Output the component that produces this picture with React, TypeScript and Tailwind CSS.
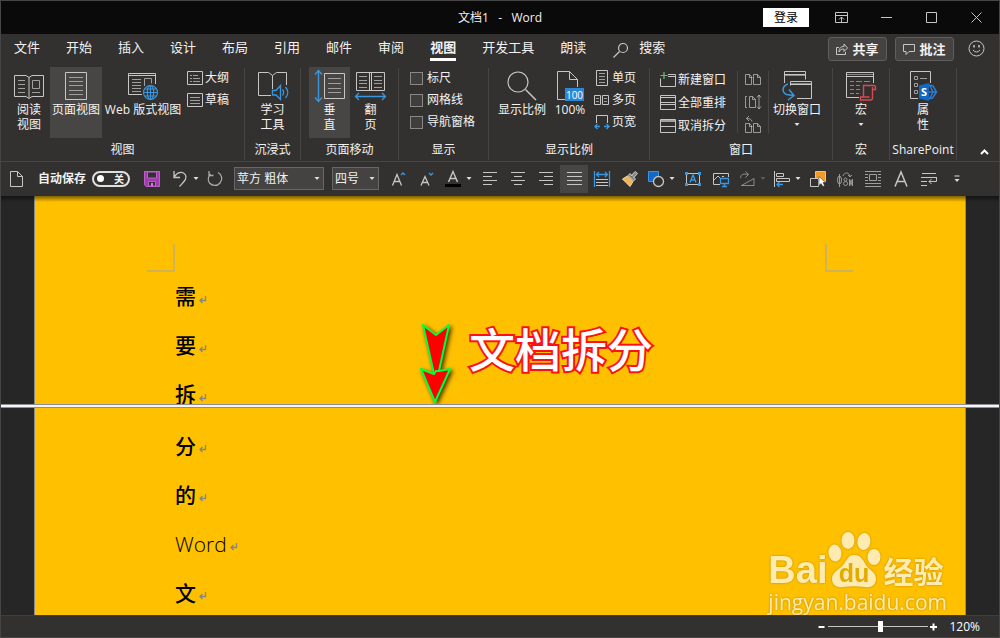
import type { ReactNode } from "react";

type IconProps = { w?: number; h?: number; className?: string; children: ReactNode };

const Icon = ({ w = 16, h = 16, className = "", children }: IconProps) => (
  <svg
    width={w}
    height={h}
    viewBox={`0 0 ${w} ${h}`}
    fill="none"
    stroke="#c8c6c4"
    aria-hidden="true"
    className={`shrink-0 overflow-visible ${className}`}
  >
    {children}
  </svg>
);

const BLUE = "#3a96dd";

/* ---------- ribbon icons ---------- */

const ReadIcon = () => (
  <Icon w={30} h={26}>
    <path d="M.5 2.500h11.500l3 2 3-2h11.500v21H18l-3 2-3-2H.5zM15 4v21" />
    <path d="M4 7.500h7M4 11.500h7M4 15.500h7M4 19.500h7M18.500 7.500h7v8h-7zM18 19.500h8" stroke="#a19f9d" />
  </Icon>
);

const PageIcon = () => (
  <Icon w={22} h={28}>
    <path d="M.5.5h21v27H.5z" />
    <path d="M4 5.500h14M4 9.500h14M4 13.500h14M4 18.500h14M4 22.500h14" stroke="#a19f9d" />
  </Icon>
);

const WebIcon = () => (
  <Icon w={30} h={28}>
    <path d="M14 22.500H.5V1.500h27V12M1 3.500h26" />
    <path d="M4 7.500h9M4 10.500h9M4 13.500h9M4 16.500h9M4 19.500h9M16.500 14V6.500h7v5" stroke="#a19f9d" />
    <g stroke={BLUE} strokeWidth="1.200">
      <circle cx="22.500" cy="20.500" r="7" />
      <ellipse cx="22.500" cy="20.500" rx="3.200" ry="7" />
      <path d="M22.500 13.500v14M15.500 20.500h14M16.500 17h12M16.500 24h12" />
    </g>
  </Icon>
);

const OutlineIcon = () => (
  <Icon h={14}>
    <path d="M.5.5h15v13H.5z" />
    <path d="M3 4.500h2M6 4.500h5M3 7.500h2M6 7.500h7M3 10.500h2M6 10.500h7" stroke="#a19f9d" />
  </Icon>
);

const DraftIcon = () => (
  <Icon h={14}>
    <path d="M.5.5h15v13H.5z" />
    <path d="M3 4.500h10M3 7.500h10M3 10.500h10" stroke="#a19f9d" />
  </Icon>
);

const LearnIcon = () => (
  <Icon w={32} h={30}>
    <path d="M14 24.500H1.500V1.500h10l4 3 4-3h10V14M15.500 4.500V18" />
    <path d="M15.500 19.500h3.500l4.500-5v14l-4.500-4.500h-3.500z" stroke={BLUE} strokeWidth="1.300" />
    <path d="M25.500 18.500c1.500 2 1.500 4 0 6M28.500 16c3 3.500 3 7.500 0 11" stroke={BLUE} strokeWidth="1.300" />
  </Icon>
);

const VerticalIcon = () => (
  <Icon w={30} h={32}>
    <path
      d="M3.500 1v30M0 4.500l3.500-4 3.500 4M0 27.500l3.500 4 3.500-4"
      stroke={BLUE}
      strokeWidth="1.400"
    />
    <path d="M9.500 3.500h20v25h-20z" />
    <path d="M13 8.500h13M13 13.500h13M13 18.500h13M13 22.500h13" stroke="#a19f9d" />
  </Icon>
);

const SideIcon = () => (
  <Icon w={31} h={28}>
    <path d="M1.500.5h28v18h-28zM14.500 1v17M16.500 1v17" />
    <path
      d="M4 4.500h8M4 8.500h8M4 11.500h8M4 15.500h8M19 4.500h8M19 8.500h8M19 11.500h8M19 15.500h8"
      stroke="#a19f9d"
    />
    <path d="M1 24.500h29M4 21l-3.500 3.500L4 28M27 21l3.500 3.500L27 28" stroke={BLUE} strokeWidth="1.300" />
  </Icon>
);

const ZoomIcon = () => (
  <Icon w={30} h={30}>
    <circle cx="11" cy="11" r="10" strokeWidth="1.200" />
    <path d="M18.500 18.500L29 29" strokeWidth="1.500" />
  </Icon>
);

const HundredIcon = () => (
  <Icon w={28} h={30}>
    <path d="M9 28.500H1.500V.5h12l8 8V16M13.500.5v8h8" />
    <path d="M9 17h19v13H9z" fill="#2b88d8" stroke="none" />
    <text x="18.500" y="27.500" textAnchor="middle" fontSize="10" fill="#ffffff" stroke="none">
      100
    </text>
  </Icon>
);

const OnePageIcon = () => (
  <Icon h={16}>
    <path d="M2.500.5h11v15h-11z" />
    <path d="M5 3.500h6M5 6.500h6M5 9.500h6M5 12.500h6" stroke="#a19f9d" />
  </Icon>
);

const MultiPageIcon = () => (
  <Icon h={12}>
    <path d="M.5 1.500h6v9h-6zM8.500 1.500h6v9h-6z" />
    <path d="M2 4.500h3M2 7.500h3M10 4.500h3M10 7.500h3" stroke="#a19f9d" />
  </Icon>
);

const PageWidthIcon = () => (
  <Icon h={16}>
    <path d="M2.500 9V1.500h11V9" />
    <path
      d="M1 12.500h5M10 12.500h5M3.500 10L1 12.500 3.500 15M12.500 10l2.500 2.500-2.500 2.500"
      stroke={BLUE}
      strokeWidth="1.400"
    />
  </Icon>
);

const NewWindowIcon = () => (
  <Icon>
    <path d="M.5 6.500v8h15V2.500H8M8 4.500h7" />
    <path d="M4 0v7M.5 3.500h7" stroke="#5fc76b" strokeWidth="1.200" />
  </Icon>
);

const ArrangeIcon = () => (
  <Icon>
    <path d="M.5.500h15v14H.5zM.5 2.500h15M.5 7.500h15M.5 9.500h15" />
  </Icon>
);

const SplitIcon = () => (
  <Icon>
    <path d="M.5 1.500h15v13H.5zM.5 8.500h15" />
    <path d="M1 3h14" strokeWidth="2" stroke="#a19f9d" />
  </Icon>
);

const CompareIcon = () => (
  <Icon className="opacity-70">
    <path d="M.5 3.500h4l2 2v8h-6zM4.500 3.500v3h3M8.500 5.500v-2h4l3 3v7h-7zM12.500 3.500v3h3" />
  </Icon>
);

const SyncIcon = () => (
  <Icon className="opacity-70">
    <path d="M2 2.500H.5v11H2M4.500 2.500h3l3 3v8h-6zM7.500 2.500v3h3M14 1v14M12 3.500L14 1l2 2.500M12 12.500L14 15l2-2.500" />
  </Icon>
);

const ResetIcon = () => (
  <Icon className="opacity-70">
    <path d="M.5 6.500h4l2 2v7h-6zM8.500 6.500h4l3 3v6h-7zM12.500 6.500v3h3M4.500 6.500v3h3M7 4.500C6.500 2.500 5 1.500 1.500 1.500M4-1L1.500 1.500 4 4" />
  </Icon>
);

const SwitchIcon = () => (
  <Icon w={30} h={30}>
    <path d="M2.500 12V.5h21v8M3 3.500h20M15 27.500h14.500v-17h-21v4M9 13.500h20" />
    <path d="M3 4.500h20M9 12.500h20" stroke="#8a8886" />
    <path d="M6 13C0 15-.5 21 4.500 23.500l7 1M7 18.500l5 6-6 4.500" stroke={BLUE} strokeWidth="1.500" />
  </Icon>
);

const MacroIcon = () => (
  <Icon w={30} h={30}>
    <path d="M13 26.500H.5V1.500h27V12M1 5.500h26" />
    <path
      d="M1 3.500h26M4 10.500h4M10 10.500h6M18 10.500h6M4 14.500h4M10 14.500h4M4 18.500h4M10 18.500h4M4 22.500h4M10 22.500h3"
      stroke="#8a8886"
    />
    <path
      d="M17.500 26V14.500h10q2 0 2 2v2h-3V27q0 2-2 2h-10v-3h9M26.500 18v-2"
      stroke="#e0474c"
      strokeWidth="1.400"
    />
  </Icon>
);

const PropertyIcon = () => (
  <Icon w={28} h={30}>
    <path d="M9 27.500H1.500V.5h20V12" />
    <path d="M5.500 5.500h3v3h-3zM11 7.500h7M5.500 12.500h3v3h-3zM5.500 19.500h3v3h-3z" stroke="#a19f9d" />
    <path d="M19 14l5 1 3.500 6-4 6-5 1M20 21h7M21 15l3 6-3 6" stroke="#2b7cd3" strokeWidth="1.500" />
    <path d="M10 14.500l10-2.500v18l-10-2.500z" fill="#1268c3" stroke="none" />
    <text x="15" y="25" textAnchor="middle" fontSize="11" fontWeight="700" fill="#ffffff" stroke="none">
      S
    </text>
  </Icon>
);

const Caret = ({ dim }: { dim?: boolean }) => (
  <svg width="8" height="4" viewBox="0 0 8 4" className="shrink-0" aria-hidden="true">
    <path d="M1.500 0h5L4 3z" fill={dim ? "#5d5b59" : "#e1dfdd"} />
  </svg>
);

/* ---------- ribbon building blocks ---------- */

const Group = ({ label, className, children }: { label: string; className: string; children: ReactNode }) => (
  <section className={`h-full shrink-0 py-px ${className}`}>
    <div className="flex h-full flex-col border-r border-[#484644]">
      <div className="-mt-px flex h-[74px] items-start">{children}</div>
      <h2 className="text-center leading-[18px]">{label}</h2>
    </div>
  </section>
);

type BigButtonProps = { icon: ReactNode; lines: string[]; className: string; active?: boolean; menu?: boolean };

const BigButton = ({ icon, lines, className, active, menu }: BigButtonProps) => (
  <button
    type="button"
    aria-pressed={active}
    className={`flex h-[71px] shrink-0 flex-col items-center pt-[3px] leading-[15px] whitespace-nowrap ${
      active ? "bg-[#484644]" : ""
    } ${className}`}
  >
    <span className="flex h-8 items-center">{icon}</span>
    {lines.map((line) => (
      <span key={line}>{line}</span>
    ))}
    {menu && (
      <span className="flex h-[15px] items-center">
        <Caret />
      </span>
    )}
  </button>
);

const SmallButton = ({ icon, label, className = "h-[22px]" }: { icon: ReactNode; label: string; className?: string }) => (
  <button type="button" className={`flex items-center gap-0.5 whitespace-nowrap ${className}`}>
    {icon}
    {label}
  </button>
);

const CheckRow = ({ label }: { label: string }) => (
  <label className="flex h-[22px] items-center gap-1">
    <input type="checkbox" className="size-[13px] appearance-none border border-[#8a8886] bg-[#3f3e3d]" />
    {label}
  </label>
);

/* ---------- window parts ---------- */

const TitleBar = () => (
  <header className="grid h-[33px] shrink-0 grid-cols-[1fr_auto_1fr] items-center bg-[#0a0a0a]">
    <span />
    <h1 className="whitespace-pre">文档1   -   Word</h1>
    <div className="flex items-center justify-end">
      <button type="button" className="mr-2.5 h-[19px] w-[46px] bg-white leading-[18px] text-black">
        登录
      </button>
      <button type="button" aria-label="功能区显示选项" className="flex w-[45px] justify-center">
        <Icon w={13} h={11}>
          <path d="M.5.5h12v10H.5zM1 3.500h11M6.500 10V5M4 7.500L6.500 5 9 7.500" />
        </Icon>
      </button>
      <button type="button" aria-label="最小化" className="flex w-[45px] justify-center">
        <Icon w={11} h={11}>
          <path d="M0 5.500h11" />
        </Icon>
      </button>
      <button type="button" aria-label="最大化" className="flex w-[45px] justify-center">
        <Icon w={11} h={11}>
          <path d="M.5.5h10v10H.5z" />
        </Icon>
      </button>
      <button type="button" aria-label="关闭" className="flex w-[45px] justify-center">
        <Icon w={11} h={11}>
          <path d="M.5.5l10 10M10.500.5l-10 10" />
        </Icon>
      </button>
    </div>
  </header>
);

const tabs = ["文件", "开始", "插入", "设计", "布局", "引用", "邮件", "审阅", "视图", "开发工具", "朗读"];

const TabBar = () => (
  <nav className="flex h-[33px] shrink-0 text-[13px] leading-[27px]">
    {tabs.map((tab) => (
      <button key={tab} type="button" className="flex shrink-0 items-start px-[13px]">
        <span className={tab === "视图" ? "h-[27px] border-b-[3px] border-white font-bold" : ""}>{tab}</span>
      </button>
    ))}
    <button type="button" className="flex shrink-0 items-start gap-2.5 px-3.5">
      <Icon w={16} h={16} className="mt-2">
        <circle cx="10" cy="6" r="4.500" strokeWidth="1.200" />
        <path d="M6.500 9.500L.5 15.500" strokeWidth="1.200" />
      </Icon>
      搜索
    </button>
    <div className="ml-auto flex shrink-0 gap-2 pt-[3px] font-bold">
      <button
        type="button"
        className="flex h-6 w-[59px] items-center justify-center gap-1 rounded-[3px] border border-[#605e5c] bg-[#444342]"
      >
        <Icon w={12} h={12}>
          <path d="M3 4.500H.5v7h9V9M3 9c0-4 2-5.500 5-5.500V1l3.500 4L8 8.500V6C6 6 4 6.500 3 9z" />
        </Icon>
        共享
      </button>
      <button
        type="button"
        className="flex h-6 w-[59px] items-center justify-center gap-1 rounded-[3px] border border-[#605e5c] bg-[#444342]"
      >
        <Icon w={12} h={12}>
          <path d="M.5 1.500h11v7H6l-3 3v-3H.5z" />
        </Icon>
        批注
      </button>
      <button type="button" aria-label="反馈" className="mr-3.5 ml-[5px] flex h-[22px] w-[18px] items-center justify-center">
        <Icon w={17} h={17}>
          <circle cx="8.500" cy="8.500" r="7.500" />
          <path d="M5 10q3.500 4 7 0" />
          <path d="M6 5v2.500M11 5v2.500" strokeWidth="1.500" />
        </Icon>
      </button>
    </div>
  </nav>
);

const Ribbon = () => (
  <div className="flex h-[95px] shrink-0 border-b border-[#484644]">
    <Group label="视图" className="w-[244px]">
      <BigButton icon={<ReadIcon />} lines={["阅读", "视图"]} className="ml-[7px] w-[42px]" />
      <BigButton icon={<PageIcon />} lines={["页面视图"]} className="w-[52px]" active />
      <BigButton icon={<WebIcon />} lines={["Web 版式视图"]} className="w-[82px]" />
      <div className="ml-[3px]">
        <SmallButton icon={<OutlineIcon />} label="大纲" />
        <SmallButton icon={<DraftIcon />} label="草稿" />
      </div>
    </Group>
    <Group label="沉浸式" className="w-14">
      <BigButton icon={<LearnIcon />} lines={["学习", "工具"]} className="w-full" />
    </Group>
    <Group label="页面移动" className="w-[98px]">
      <BigButton icon={<VerticalIcon />} lines={["垂", "直"]} className="ml-2 w-[41px]" active />
      <BigButton icon={<SideIcon />} lines={["翻", "页"]} className="w-[41px]" />
    </Group>
    <Group label="显示" className="w-[90px]">
      <div className="pl-[11px]">
        <CheckRow label="标尺" />
        <CheckRow label="网格线" />
        <CheckRow label="导航窗格" />
      </div>
    </Group>
    <Group label="显示比例" className="w-[161px]">
      <BigButton icon={<ZoomIcon />} lines={["显示比例"]} className="ml-[9px] w-12" />
      <BigButton icon={<HundredIcon />} lines={["100%"]} className="w-12" />
      <div>
        <SmallButton icon={<OnePageIcon />} label="单页" />
        <SmallButton icon={<MultiPageIcon />} label="多页" />
        <SmallButton icon={<PageWidthIcon />} label="页宽" />
      </div>
    </Group>
    <Group label="窗口" className="w-[183px]">
      <div className="pt-px pl-2.5">
        <SmallButton icon={<NewWindowIcon />} label="新建窗口" className="h-[23px]" />
        <SmallButton icon={<ArrangeIcon />} label="全部重排" className="h-[23px]" />
        <SmallButton icon={<SplitIcon />} label="取消拆分" className="h-[23px]" />
      </div>
      <div className="mt-1 ml-[11px] flex h-[62px] w-8 flex-col items-center justify-between border-x border-[#484644]">
        <button type="button" aria-label="并排查看">
          <CompareIcon />
        </button>
        <button type="button" aria-label="同步滚动">
          <SyncIcon />
        </button>
        <button type="button" aria-label="重设窗口位置">
          <ResetIcon />
        </button>
      </div>
      <BigButton icon={<SwitchIcon />} lines={["切换窗口"]} className="w-14" menu />
    </Group>
    <Group label="宏" className="w-[57px]">
      <BigButton icon={<MacroIcon />} lines={["宏"]} className="w-full" menu />
    </Group>
    <Group label="SharePoint" className="w-[67px]">
      <BigButton icon={<PropertyIcon />} lines={["属", "性"]} className="w-full" />
    </Group>
    <button type="button" aria-label="折叠功能区" className="mr-2.5 mb-1.5 ml-auto self-end">
      <Icon w={9} h={6}>
        <path d="M1 5l3.500-3.500L8 5" stroke="#ffffff" strokeWidth="2" />
      </Icon>
    </button>
  </div>
);

type ToolProps = { label: string; className?: string; split?: boolean; dim?: boolean; children: ReactNode };

const Tool = ({ label, className = "", split, dim, children }: ToolProps) => (
  <button
    type="button"
    aria-label={label}
    className={`flex h-7 shrink-0 items-center ${split ? "w-[35px] gap-1 pl-1" : "w-7 justify-center"} ${className}`}
  >
    {children}
    {split && <Caret dim={dim} />}
  </button>
);

const Picker = ({ label, value, className }: { label: string; value: string; className: string }) => (
  <div className={`relative shrink-0 ${className}`}>
    <select
      aria-label={label}
      className="block h-[23px] w-full appearance-none border border-[#696765] bg-[#444342] pl-0.5 leading-5"
    >
      <option>{value}</option>
    </select>
    <span className="pointer-events-none absolute top-[10px] right-[3px]">
      <Caret />
    </span>
  </div>
);

const QuickBar = () => (
  <div role="toolbar" className="flex h-[34px] shrink-0 items-center pb-px">
    <Tool label="新建" className="ml-px">
      <Icon w={13} h={16}>
        <path d="M.5.5h7l5 5v10H.5zM7.500.5v5h5" />
      </Icon>
    </Tool>
    <label className="ml-2 flex shrink-0 items-center gap-1.5 font-bold">
      自动保存
      <input type="checkbox" role="switch" className="sr-only" />
      <span className="flex h-4 w-[38px] items-center justify-between rounded-full border-2 border-[#e1dfdd] pr-1 pl-[3px] text-[10px] leading-3">
        <span className="size-[7px] rounded-full bg-white" />关
      </span>
    </label>
    <Tool label="保存" className="ml-2">
      <Icon>
        <path d="M0 0h16v16H2l-2-2z" fill="#a33ab0" stroke="none" />
        <path d="M.5.5h15v15H2.500l-2-2z" stroke="#b860c4" />
        <path d="M3.500 1h9v6h-9zM4.500 10.500h7V15h-7z" fill="#323130" stroke="#b860c4" />
        <path d="M7 12h2v3H7z" fill="#c586d0" stroke="none" />
      </Icon>
    </Tool>
    <Tool label="撤消" split className="ml-0.5">
      <Icon>
        <path d="M2 0v6.500h6M2 6C6 .5 11 0 13.500 4c2 4-2 7-6 11.500" strokeWidth="1.300" />
      </Icon>
    </Tool>
    <Tool label="重复">
      <Icon className="-ml-1 opacity-80">
        <path
          d="M2 0v4.500h4.500M11 1.500c4 2 5 7 2 10.500-3 3.500-8 3-10.500 0C.5 9 1 6 3.500 3"
          strokeWidth="1.300"
        />
      </Icon>
    </Tool>
    <Picker label="字体" value="苹方 粗体" className="ml-[3px] w-[90px]" />
    <Picker label="字号" value="四号" className="mr-1.5 ml-2 w-[47px]" />
    <Tool label="增大字号">
      <Icon w={14}>
        <path d="M.5 14.500l4.500-11 4.500 11M2 10.500h6" strokeWidth="1.300" />
        <path d="M9 4l2-2 2 2" stroke={BLUE} strokeWidth="1.300" />
      </Icon>
    </Tool>
    <Tool label="减小字号">
      <Icon w={14}>
        <path d="M1 14.500l4-9 4 9M2.500 11.500h5" strokeWidth="1.300" />
        <path d="M9 2l2 2 2-2" stroke={BLUE} strokeWidth="1.300" />
      </Icon>
    </Tool>
    <Tool label="字体颜色" split>
      <Icon>
        <path d="M3.500 11l4.500-10.500L12.500 11M5 7.500h6" strokeWidth="1.400" />
        <path d="M0 13h16v3H0z" fill="#000000" stroke="none" />
      </Icon>
    </Tool>
    <Tool label="左对齐">
      <Icon w={15}>
        <path d="M0 1.500h14M0 5.500h9M0 9.500h14M0 13.500h9" />
      </Icon>
    </Tool>
    <Tool label="居中">
      <Icon w={15}>
        <path d="M0 1.500h14M3 5.500h8M0 9.500h14M3 13.500h8" />
      </Icon>
    </Tool>
    <Tool label="右对齐">
      <Icon w={15}>
        <path d="M0 1.500h14M5 5.500h9M0 9.500h14M5 13.500h9" />
      </Icon>
    </Tool>
    <Tool label="两端对齐" className="bg-[#484644]">
      <Icon w={15}>
        <path d="M0 1.500h15M0 5.500h15M0 9.500h15M0 13.500h15" />
      </Icon>
    </Tool>
    <Tool label="分散对齐">
      <Icon>
        <path
          d="M.5 0v16M15.500 0v16M3 3.500h10M5 1L2.500 3.500 5 6M11 1l2.500 2.500L11 6"
          stroke={BLUE}
          strokeWidth="1.300"
        />
        <path d="M2 8.500h12M2 11.500h12M2 14.500h12" />
      </Icon>
    </Tool>
    <Tool label="格式刷">
      <Icon>
        <path d="M9 5l4-4.500 2.500 2L11.500 7M6 4.500l5.500 5.500 2-2L8 2.500z" fill="#8a8886" />
        <path d="M5.500 5l5.500 5.500L8 15.500.5 8z" fill="#eeb65a" stroke="#f6d9a0" />
      </Icon>
    </Tool>
    <Tool label="形状" split>
      <Icon>
        <path d="M.5.5h10v10H.5z" fill="#1268c3" stroke={BLUE} />
        <circle cx="10.500" cy="10.500" r="5" fill="#323130" strokeWidth="1.300" />
      </Icon>
    </Tool>
    <Tool label="文本框">
      <Icon>
        <path d="M1.500 2.500h13v11h-13z" />
        <path d="M0 1h3v3H0zM13 1h3v3h-3zM0 12h3v3H0zM13 12h3v3h-3z" fill={BLUE} stroke="none" />
        <path d="M5 11.500l3-7.500 3 7.500M6 9h4" stroke={BLUE} strokeWidth="1.400" />
      </Icon>
    </Tool>
    <Tool label="图片">
      <Icon>
        <path d="M7 13.500H.5v-11h15V6M1 9l4-4 3 3M9 5.500h2" />
        <path d="M7.500 7.500h8v5h-8zM11.500 13v2.500M9 15.500h5" stroke={BLUE} strokeWidth="1.300" />
      </Icon>
    </Tool>
    <Tool label="旋转" split dim>
      <Icon className="opacity-60">
        <path d="M2.500 14.500h12.500v-7zM1.500 7C2 3 4.500 2.500 9 3.500M6.500.5l3 3-3 3" />
      </Icon>
    </Tool>
    <Tool label="对齐对象" split>
      <Icon>
        <path d="M.5 0v16M2.500 2.500h7v3h-7zM2.500 7.500h13v3h-13z" />
        <path d="M3 13.500h6M5.500 11L3 13.500 5.500 16" stroke={BLUE} strokeWidth="1.300" />
      </Icon>
    </Tool>
    <Tool label="选择窗格" className="w-[26px]">
      <Icon>
        <path d="M5.500.5h10v10h-10z" fill="#f09a28" stroke="#f6c070" />
        <path d="M.5 7.500h8v8h-8z" fill="#323130" />
        <path d="M9 5.500v9l2-2 2 3 1.500-1-1.500-3h2.500z" fill="#ffffff" stroke="#323130" strokeWidth=".5" />
      </Icon>
    </Tool>
    <Tool label="纵横混排">
      <Icon className="opacity-70">
        <ellipse cx="2.500" cy="9" rx="2" ry="4" />
        <path d="M2.500 3v13M6 5c1-4 6-4 7 0M11 4l2 2 2-2" />
        <circle cx="8.500" cy="8.500" r="1.500" />
        <circle cx="8.500" cy="12.500" r="2" />
        <path d="M12.500 8l3 7M15.500 8l-3 7M12.500 15V8.500M15.500 8v7" />
      </Icon>
    </Tool>
    <Tool label="环绕文字">
      <Icon>
        <path
          d="M0 .5h16M0 3.500h3M13 3.500h3M0 6.500h3M13 6.500h3M0 9.500h3M13 9.500h3M0 12.500h16M0 15.500h16M4.500 3.500h7v6h-7z"
          stroke="#a19f9d"
        />
      </Icon>
    </Tool>
    <Tool label="字体">
      <Icon>
        <path d="M2 15.500L8 1l6 14.500M4.500 10.500h7.500" strokeWidth="1.500" />
      </Icon>
    </Tool>
    <Tool label="自动换行">
      <Icon>
        <path d="M1 2.500h14M0 6.500h16M0 10.500h6M0 14.500h6M15.500 6.500v4H8M10.500 8L8 10.500l2.500 2.500" />
      </Icon>
    </Tool>
    <Tool label="自定义快速访问工具栏">
      <Icon w={8} h={8}>
        <path d="M1.500 1h5" stroke="#e1dfdd" />
        <path d="M1.500 4h5L4 7z" fill="#e1dfdd" stroke="none" />
      </Icon>
    </Tool>
  </div>
);

const Line = ({ text, light }: { text: string; light?: boolean }) => (
  <p
    className={`flex h-[49px] shrink-0 items-center gap-[3px] pl-7 text-[21px] leading-[49px] text-black ${
      light ? "font-light" : "font-medium"
    }`}
  >
    {text}
    <Icon w={7} h={8} className="mt-1.5">
      <path d="M6.500 0v4.500H1M3.500 2L1 4.500 3.500 7" stroke="#858585" strokeWidth="1.300" />
    </Icon>
  </p>
);

const Annotation = () => (
  <div className="absolute top-[116px] left-[384px] flex items-start">
    <svg
      width="36"
      height="96"
      viewBox="0 0 36 96"
      aria-hidden="true"
      className="drop-shadow-[2px_2px_2px_rgba(0,0,0,0.7)]"
    >
      <path
        d="M4 13l13 10 13-10-10 46 11-2-15 33L2 57l13 5z"
        fill="#ff0000"
        stroke="#00ff40"
        strokeWidth="2"
        strokeLinejoin="round"
      />
      <path d="M15 62l2-3 3 0" fill="none" stroke="#00ff40" strokeWidth="2" />
    </svg>
    <p className="ml-3.5 text-[46px] leading-[74px] font-medium text-white [-webkit-text-stroke:4px_#ff1010] [paint-order:stroke_fill]">
      文档拆分
    </p>
  </div>
);

const Watermark = () => (
  <div className="absolute right-[18px] bottom-0 text-[#ffebb0] drop-shadow-[0_0_1px_#b98b00]">
    <div className="flex h-[58px] items-end">
      <span className="font-['Liberation_Sans',sans-serif] text-[38px] leading-[38px] font-bold">Bai</span>
      <svg width="56" height="58" viewBox="0 0 56 58" aria-hidden="true">
        <g fill="currentColor">
          <ellipse cx="8" cy="22" rx="6.500" ry="8.500" transform="rotate(-8 8 22)" />
          <ellipse cx="21" cy="9.500" rx="6.500" ry="8.500" />
          <ellipse cx="37" cy="10.500" rx="6.500" ry="8.500" transform="rotate(8 37 10)" />
          <ellipse cx="47" cy="26" rx="6.500" ry="8" />
          <path d="M27 24c7 0 9 5 12 10s10 7 10 14c0 6-5 9-11 8-7-1-15-1-22 0-6 1-11-2-11-8 0-7 7-9 11-14s5-10 11-10z" />
        </g>
        <text
          x="27"
          y="51"
          textAnchor="middle"
          fontSize="25"
          fontWeight="700"
          fill="#e3aa00"
          fontFamily="Liberation Sans, sans-serif"
        >
          du
        </text>
      </svg>
      <span className="text-[30px] leading-[34px] font-bold">经验</span>
    </div>
    <p className="text-[21px] leading-[26px]">jingyan.baidu.com</p>
  </div>
);

const Document = () => (
  <main className="relative flex min-h-0 flex-1 flex-col bg-[#262626]">
    <div className="relative mx-[33px] min-h-0 flex-1 border-x border-[#8a8a8a] bg-[#ffc000]">
      <div className="flex h-1/2 flex-col px-28 pt-12">
        <div className="flex h-7 shrink-0 justify-between">
          <span className="w-7 border-r-2 border-b-2 border-[#d0b25a]" />
          <span className="w-7 border-b-2 border-l-2 border-[#d0b25a]" />
        </div>
        <Line text="需" />
        <Line text="要" />
        <Line text="拆" />
      </div>
      <div className="flex h-1/2 flex-col px-28 pt-4">
        <Line text="分" />
        <Line text="的" />
        <Line text="Word" light />
        <Line text="文" />
      </div>
      <Annotation />
      <Watermark />
    </div>
    {/* split bar lies across both margins */}
    <div
      role="separator"
      className="absolute inset-x-0 top-1/2 h-1 -translate-y-1/2 border-y border-[#8d8d94] bg-[#f4f4fa]"
    />
    <div className="absolute inset-x-0 top-0 h-1.5 bg-linear-to-b from-black/50 to-transparent" />
  </main>
);

const StatusBar = () => (
  <footer className="z-10 flex h-[22px] shrink-0 items-center justify-end border-t border-[#3f3e3d] bg-[#323130] pr-[19px] text-white">
    <button type="button" aria-label="缩小" className="mr-[3px]">
      <Icon w={7} h={8}>
        <path d="M.5 4h6" stroke="#ffffff" strokeWidth="2" />
      </Icon>
    </button>
    <input
      type="range"
      aria-label="显示比例"
      min={0}
      max={100}
      defaultValue={52}
      className="h-3 w-[100px] appearance-none bg-transparent [&::-webkit-slider-runnable-track]:h-px [&::-webkit-slider-runnable-track]:bg-[#c8c6c4] [&::-webkit-slider-thumb]:-mt-[5px] [&::-webkit-slider-thumb]:h-[11px] [&::-webkit-slider-thumb]:w-[5px] [&::-webkit-slider-thumb]:appearance-none [&::-webkit-slider-thumb]:bg-white"
    />
    <button type="button" aria-label="放大" className="ml-0.5">
      <Icon w={7} h={8}>
        <path d="M0 4h7M3.500.5v7" stroke="#ffffff" strokeWidth="2" />
      </Icon>
    </button>
    <span className="ml-3">120%</span>
  </footer>
);

export default function App() {
  return (
    <div className="flex h-screen flex-col overflow-hidden border border-[#464646] bg-[#323130] font-['Open_Sans','Noto_Sans_CJK_SC',sans-serif] text-xs text-[#f3f2f1]">
      <TitleBar />
      <TabBar />
      <Ribbon />
      <QuickBar />
      <Document />
      <StatusBar />
    </div>
  );
}
